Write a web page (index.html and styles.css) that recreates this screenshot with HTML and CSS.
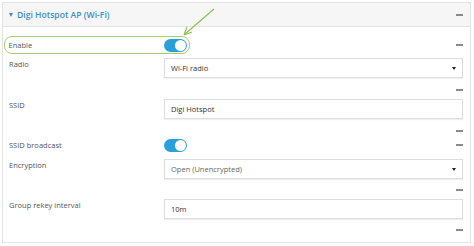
FILE: index.html
```
<!DOCTYPE html>
<html lang="en">
<head>
    <meta charset="UTF-8">
    <title>Digi Hotspot AP (Wi-Fi)</title>
    <link rel="stylesheet" href="styles.css">
</head>
<body>
    <div class="panel">
        <div class="panel-head">
            <span class="caret"></span>
            <span class="panel-title">Digi Hotspot AP (Wi-Fi)</span>
            <span class="minus"></span>
        </div>
        <div class="form">
            <div class="row row-enable">
                <div class="highlight">
                    <span class="label">Enable</span>
                    <span class="toggle"></span>
                </div>
                <span class="minus"></span>
            </div>
            <div class="row field mt4">
                <span class="label">Radio</span>
                <div class="control select">Wi-Fi radio<span class="arrow"></span></div>
            </div>
            <div class="minus-row mt3"><span class="minus"></span></div>
            <div class="row field">
                <span class="label">SSID</span>
                <div class="control input">Digi Hotspot</div>
            </div>
            <div class="minus-row mt3"><span class="minus"></span></div>
            <div class="row row-toggle">
                <span class="label">SSID broadcast</span>
                <span class="toggle"></span>
                <span class="minus"></span>
            </div>
            <div class="row field mt7">
                <span class="label">Encryption</span>
                <div class="control select muted">Open (Unencrypted)<span class="arrow"></span></div>
            </div>
            <div class="minus-row mt2"><span class="minus"></span></div>
            <div class="row field">
                <span class="label">Group rekey interval</span>
                <div class="control input">10m</div>
            </div>
            <div class="minus-row mt2"><span class="minus"></span></div>
        </div>
    </div>

    <svg class="pointer" width="60" height="50" viewBox="0 0 60 50">
        <line x1="44" y1="9" x2="15" y2="34" stroke="#8cc152" stroke-width="1.2"/>
        <path d="M14 35 L17 27 M14 35 L22 32" stroke="#8cc152" stroke-width="1.2" fill="none"/>
    </svg>
</body>
</html>
```
FILE: styles.css
```
body {
    margin: 0;
    background: #fff;
    font-family: "Open Sans", "Noto Sans", sans-serif;
    font-size: 7.5px;
    color: #555;
    position: relative;
}
.panel {
    margin: 2px 3px 0 2px;
    height: 241px;
    border: 1px solid #e3e3e3;
    box-sizing: border-box;
}
.panel-head {
    display: flex;
    align-items: center;
    height: 23px;
    padding: 0 7px 0 6px;
    background: #f5f6f5;
    border-bottom: 1px solid #e3e3e3;
}
.caret {
    width: 0;
    height: 0;
    border-left: 2px solid transparent;
    border-right: 2px solid transparent;
    border-top: 4px solid #3a8ecb;
    margin-right: 4px;
}
.panel-title {
    flex: 1;
    color: #3a8ecb;
    font-weight: 600;
    font-size: 8.6px;
}
.minus {
    width: 7px;
    height: 2px;
    background: #8a8a8a;
    margin-left: auto;
}
.form {
    padding: 9px 7px 0 1px;
}
.row {
    display: flex;
}
.row-enable {
    height: 18px;
    align-items: center;
}
.highlight {
    display: flex;
    align-items: center;
    width: 186px;
    height: 18px;
    box-sizing: border-box;
    border: 1.5px solid #a8d070;
    border-radius: 8px;
    padding-left: 3.5px;
}
.highlight .label {
    width: 155px;
    padding-left: 0;
}
.label {
    width: 160px;
    box-sizing: border-box;
    padding-left: 5px;
    line-height: 12px;
    flex-shrink: 0;
}
.field {
    height: 20px;
    align-items: flex-start;
}
.row-toggle {
    height: 14px;
    align-items: center;
    margin-top: -2px;
}
.control {
    width: 301px;
    height: 20px;
    box-sizing: border-box;
    border: 1px solid #ddd;
    box-shadow: 0 1px 1px rgba(0, 0, 0, 0.06);
    padding: 0 6px;
    display: flex;
    align-items: center;
    color: #333;
    background: #fff;
}
.select {
    justify-content: space-between;
}
.muted {
    color: #666;
}
.arrow {
    width: 0;
    height: 0;
    border-left: 2.5px solid transparent;
    border-right: 2.5px solid transparent;
    border-top: 3px solid #222;
}
.toggle {
    position: relative;
    width: 23px;
    height: 13px;
    border-radius: 7px;
    background: #2a9fd8;
    flex-shrink: 0;
}
.toggle::after {
    content: "";
    position: absolute;
    right: 1px;
    top: 1px;
    width: 11px;
    height: 11px;
    border-radius: 50%;
    background: #fff;
}
.minus-row {
    display: flex;
    align-items: center;
    height: 18px;
}
.mt2 { margin-top: 2px; }
.mt3 { margin-top: 3px; }
.mt4 { margin-top: 4px; }
.mt7 { margin-top: 7px; }
.pointer {
    position: absolute;
    left: 170px;
    top: 0;
}
```
